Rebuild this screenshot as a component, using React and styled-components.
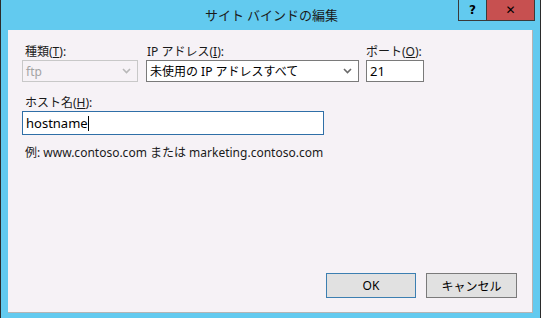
import styled, { createGlobalStyle } from "styled-components"

const Global = createGlobalStyle`
  body {
    margin: 0;
    background: #ffffff;
    font-family: "Noto Sans", "Noto Sans CJK JP", sans-serif;
  }
`

const Window = styled.div`
  width: 541px;
  height: 318px;
  box-sizing: border-box;
  background: #62caef;
  border-left: 1px solid #2b2b2b;
  border-right: 1px solid #2b2b2b;
  display: flex;
  flex-direction: column;
  padding: 0 7px 5px 7px;
`

const TitleBar = styled.div`
  height: 30px;
  display: grid;
  grid-template-columns: 1fr auto 1fr;
  margin: 0 -2px 0 0;
`

const Title = styled.div`
  grid-column: 2;
  align-self: center;
  font-family: "Noto Sans CJK JP", sans-serif;
  font-size: 13px;
  color: #1a1a1a;
  margin-top: -1px;
`

const Caption = styled.div`
  grid-column: 3;
  justify-self: end;
  display: flex;
  height: 21px;
  box-sizing: border-box;
  border: 1px solid #3a3a3a;
  border-top: none;
`

const CapButton = styled.div`
  width: ${p => p.$w}px;
  background: ${p => p.$bg};
  display: flex;
  align-items: center;
  justify-content: center;
  font-family: "DejaVu Sans", sans-serif;
  font-weight: bold;
  font-size: 12px;
  color: #000;
  & + & {
    border-left: 1px solid #3a3a3a;
  }
`

const Content = styled.div`
  flex: 1;
  background: #f6f2f6;
  border-right: 1px solid #b4b4b4;
  border-bottom: 1px solid #b4b4b4;
  display: flex;
  flex-direction: column;
  padding: 13px 15px 14px 14px;
`

const FieldRow = styled.div`
  display: flex;
  align-items: flex-start;
`

const Field = styled.div`
  display: flex;
  flex-direction: column;
  width: ${p => p.$w}px;
  margin-right: ${p => p.$gap || 0}px;
`

const Label = styled.div`
  font-size: 12px;
  color: #1a1a1a;
  height: 17px;
  line-height: 17px;
  padding-left: ${p => p.$indent || 0}px;
  white-space: nowrap;
  u {
    text-decoration: underline;
    text-underline-offset: 1px;
  }
`

const Combo = styled.div`
  height: 22px;
  box-sizing: border-box;
  background: ${p => (p.$disabled ? "#f6f2f6" : "#ffffff")};
  border: 1px solid ${p => (p.$disabled ? "#c8c8c8" : "#7a7a7a")};
  display: flex;
  align-items: center;
  padding: 0 6px 0 3px;
  font-size: 12px;
  color: ${p => (p.$disabled ? "#a3a3a3" : "#000")};
  margin-top: 0;
  span {
    flex: 1;
    white-space: nowrap;
  }
`

const TextBox = styled.div`
  height: ${p => p.$h || 22}px;
  box-sizing: border-box;
  background: #fff;
  border: 1px solid ${p => (p.$focus ? "#2f6fa7" : "#7a7a7a")};
  display: flex;
  align-items: center;
  padding: 0 3px;
  font-size: 13px;
  color: #000;
  width: ${p => (p.$w ? `${p.$w}px` : "auto")};
`

const Caret = styled.span`
  display: inline-block;
  width: 1px;
  height: 15px;
  background: #000;
  margin-left: 0;
`

const Hint = styled.div`
  font-size: 12px;
  color: #1a1a1a;
  margin-top: 8px;
  padding-left: 3px;
  white-space: nowrap;
`

const Footer = styled.div`
  margin-top: auto;
  display: flex;
  justify-content: flex-end;
  gap: 10px;
`

const Button = styled.div`
  width: ${p => p.$w}px;
  height: 25px;
  box-sizing: border-box;
  background: #e1e1e1;
  border: 1px solid ${p => (p.$default ? "#3c7fb1" : "#7a7a7a")};
  display: flex;
  align-items: center;
  justify-content: center;
  font-size: 12px;
  color: #000;
`

const Chevron = ({ color }) => (
  <svg width="9" height="6" viewBox="0 0 9 6">
    <path d="M1 1 L4.5 4.5 L8 1" fill="none" stroke={color} strokeWidth="1.6" />
  </svg>
)

const App = () => {
  return (
    <Window>
      <Global />
      <TitleBar>
        <Title>サイト バインドの編集</Title>
        <Caption>
          <CapButton $w={27} $bg="#62caef">?</CapButton>
          <CapButton $w={47} $bg="#c75050">✕</CapButton>
        </Caption>
      </TitleBar>
      <Content>
        <FieldRow>
          <Field $w={116} $gap={8}>
            <Label $indent={3}>種類(<u>T</u>):</Label>
            <Combo $disabled>
              <span>ftp</span>
              <Chevron color="#b8b8b8" />
            </Combo>
          </Field>
          <Field $w={213} $gap={7}>
            <Label $indent={1}>IP アドレス(<u>I</u>):</Label>
            <Combo>
              <span>未使用の IP アドレスすべて</span>
              <Chevron color="#6a6a6a" />
            </Combo>
          </Field>
          <Field $w={58}>
            <Label>ポート(<u>O</u>):</Label>
            <TextBox>21</TextBox>
          </Field>
        </FieldRow>
        <Label $indent={3} style={{ marginTop: 12 }}>ホスト名(<u>H</u>):</Label>
        <TextBox $w={302} $h={24} $focus>
          hostname<Caret />
        </TextBox>
        <Hint>例: www.contoso.com または marketing.contoso.com</Hint>
        <Footer>
          <Button $w={90} $default>OK</Button>
          <Button $w={91}>キャンセル</Button>
        </Footer>
      </Content>
    </Window>
  )
}

export default App
